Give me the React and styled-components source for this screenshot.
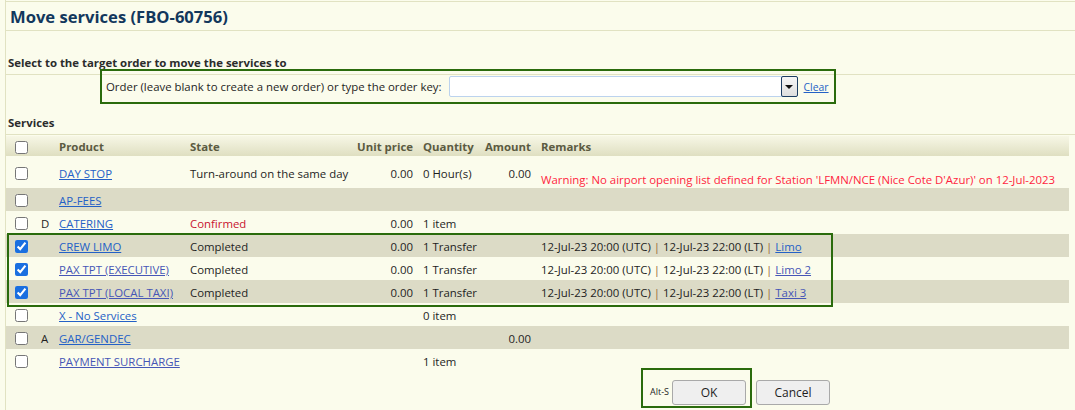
import React from "react";
import styled, { createGlobalStyle } from "styled-components";

const FONT = `"Open Sans", "Noto Sans", Arial, sans-serif`;

const Global = createGlobalStyle`
  html, body { margin: 0; padding: 0; background: #fbfcec; }
  body { font-family: ${FONT}; font-size: 11.4px; color: #1e1e1e; }
`;

const Page = styled.div`
  margin-left: 5px;
  min-height: 410px;
  border-left: 1px solid #e1e2c2;
  padding-top: 1px;
  box-sizing: border-box;
`;

const TitleBar = styled.div`
  height: 28px;
  border-top: 1px solid #e1e2c2;
  border-bottom: 1px solid #e1e2c2;
  display: flex;
  align-items: center;
  padding-left: 4px;
`;

const Title = styled.h1`
  margin: 0;
  font-size: 16.6px;
  font-weight: 700;
  color: #12375c;
`;

const SectionHeading = styled.div`
  margin-top: ${(p) => p.$gap}px;
  padding: 1px 0 3px 2px;
  line-height: 16px;
  font-weight: 700;
  color: #2c2c2c;
  border-bottom: 1px solid #e1e2c2;
`;

const OrderBox = styled.div`
  position: relative;
  margin: -6px 0 0 94px;
  width: 736px;
  height: 35px;
  box-sizing: border-box;
  border: 2px solid #2a6b0c;
  display: flex;
  align-items: center;
  padding: 0 4px;
`;

const Label = styled.span`
  white-space: nowrap;
  color: #1e1e1e;
`;

const Combo = styled.div`
  margin-left: 7px;
  width: 349px;
  height: 21px;
  box-sizing: border-box;
  border: 1px solid #bcd3ee;
  border-radius: 2px;
  background: #fff;
  display: flex;
  justify-content: flex-end;
`;

const ComboButton = styled.div`
  width: 17px;
  height: 21px;
  margin: -1px -1px 0 0;
  box-sizing: border-box;
  border: 1px solid #1d3d62;
  border-radius: 2px;
  background: linear-gradient(#f6f6f6, #dedede);
  display: flex;
  align-items: center;
  justify-content: center;
`;

const Arrow = styled.span`
  width: 0;
  height: 0;
  border-left: 4px solid transparent;
  border-right: 4px solid transparent;
  border-top: 4px solid #111;
`;

const Link = styled.a`
  color: ${(p) => (p.$visited ? "#4656b6" : "#2461c6")};
  text-decoration: underline;
  cursor: pointer;
`;

const ClearLink = styled(Link)`
  margin-left: 6px;
  font-size: 10.4px;
`;

const TableWrap = styled.div`
  position: relative;
  margin-top: 1px;
  width: 1063px;
`;

const Table = styled.table`
  width: 1063px;
  table-layout: fixed;
  border-collapse: collapse;
  border-spacing: 0;
`;

const HeadRow = styled.tr`
  height: 20px;
  background: linear-gradient(#f7f7e6, #dfdfc1);
`;

const Th = styled.th`
  padding: 0 5px;
  font-weight: 700;
  color: #5b5a41;
  text-align: ${(p) => p.$align || "left"};
  white-space: nowrap;
`;

const Row = styled.tr`
  height: ${(p) => p.$h || 23}px;
  background: ${(p) => (p.$alt ? "#dcdbc6" : "transparent")};
`;

const Td = styled.td`
  padding: 2px 5px 0;
  vertical-align: middle;
  white-space: nowrap;
  text-align: ${(p) => p.$align || "left"};
`;

const FlagCell = styled(Td)`
  padding-left: 5px;
  padding-right: 0;
`;

const CheckCell = styled.td`
  text-align: center;
  padding: 0;
`;

const Check = styled.input.attrs({ type: "checkbox" })`
  margin: 0;
  width: 13px;
  height: 13px;
  vertical-align: middle;
  accent-color: #1a6fe0;
`;

const State = styled.span`
  color: ${(p) => (p.$tone === "red" ? "#c8122e" : "#1e1e1e")};
`;

const Warning = styled.div`
  padding-top: 13px;
  line-height: 17px;
  color: #ff1f3f;
`;

const Pipe = styled.span`
  color: #9a6b3a;
`;

const Highlight = styled.div`
  position: absolute;
  left: ${(p) => p.$left}px;
  top: ${(p) => p.$top}px;
  width: ${(p) => p.$w}px;
  height: ${(p) => p.$h}px;
  border: 2px solid #2a6b0c;
  box-sizing: border-box;
  pointer-events: none;
`;

const Footer = styled.div`
  margin-top: -4px;
  padding-left: 635px;
  display: flex;
  align-items: flex-start;
  gap: 4px;
`;

const HotkeyGroup = styled.div`
  position: relative;
  width: 111px;
  height: 40px;
  box-sizing: border-box;
  border: 2px solid #2a6b0c;
  display: flex;
  align-items: flex-end;
  padding: 0 2px 1px 7px;
`;

const Hint = styled.span`
  font-size: 9px;
  color: #1e1e1e;
  margin-right: 3px;
  align-self: center;
  margin-top: 8px;
`;

const Button = styled.button`
  width: 74px;
  height: 25px;
  box-sizing: border-box;
  border: 1px solid #a9a9a9;
  border-radius: 3px;
  background: #efefef;
  font-family: ${FONT};
  font-size: 12px;
  color: #1e1e1e;
  padding: 0;
  margin-top: ${(p) => p.$offset || 0}px;
`;

const rows = [
  { product: "DAY STOP", state: "Turn-around on the same day", price: "0.00", qty: "0 Hour(s)", amount: "0.00", warning: "Warning: No airport opening list defined for Station 'LFMN/NCE (Nice Cote D'Azur)' on 12-Jul-2023", h: 32 },
  { product: "AP-FEES", alt: true },
  { flag: "D", product: "CATERING", state: "Confirmed", tone: "red", price: "0.00", qty: "1 item" },
  { product: "CREW LIMO", state: "Completed", price: "0.00", qty: "1 Transfer", link: "Limo", checked: true, alt: true },
  { product: "PAX TPT (EXECUTIVE)", state: "Completed", price: "0.00", qty: "1 Transfer", link: "Limo 2", checked: true, visited: true },
  { product: "PAX TPT (LOCAL TAXI)", state: "Completed", price: "0.00", qty: "1 Transfer", link: "Taxi 3", checked: true, alt: true, visited: true },
  { product: "X - No Services", qty: "0 item" },
  { flag: "A", product: "GAR/GENDEC", amount: "0.00", alt: true },
  { product: "PAYMENT SURCHARGE", qty: "1 item", visited: true },
];

export default function App() {
  return (
    <>
      <Global />
      <Page>
        <TitleBar>
          <Title>Move services (FBO-60756)</Title>
        </TitleBar>
        <SectionHeading $gap={23}>Select to the target order to move the services to</SectionHeading>
        <OrderBox>
          <Label>Order (leave blank to create a new order) or type the order key:</Label>
          <Combo>
            <ComboButton>
              <Arrow />
            </ComboButton>
          </Combo>
          <ClearLink>Clear</ClearLink>
        </OrderBox>
        <SectionHeading $gap={10}>Services</SectionHeading>
        <TableWrap>
          <Table>
            <colgroup>
              <col style={{ width: 30 }} />
              <col style={{ width: 18 }} />
              <col style={{ width: 131 }} />
              <col style={{ width: 165 }} />
              <col style={{ width: 68 }} />
              <col style={{ width: 62 }} />
              <col style={{ width: 56 }} />
              <col />
            </colgroup>
            <thead>
              <HeadRow>
                <CheckCell as="th"><Check readOnly /></CheckCell>
                <Th />
                <Th>Product</Th>
                <Th>State</Th>
                <Th $align="right">Unit price</Th>
                <Th>Quantity</Th>
                <Th $align="right">Amount</Th>
                <Th>Remarks</Th>
              </HeadRow>
            </thead>
            <tbody>
              {rows.map((r) => (
                <Row key={r.product} $alt={r.alt} $h={r.h}>
                  <CheckCell><Check checked={!!r.checked} readOnly /></CheckCell>
                  <FlagCell>{r.flag}</FlagCell>
                  <Td><Link $visited={r.visited}>{r.product}</Link></Td>
                  <Td><State $tone={r.tone}>{r.state}</State></Td>
                  <Td $align="right">{r.price}</Td>
                  <Td>{r.qty}</Td>
                  <Td $align="right">{r.amount}</Td>
                  <Td>
                    {r.warning && <Warning>{r.warning}</Warning>}
                    {r.link && (
                      <>
                        12-Jul-23 20:00 (UTC) <Pipe>|</Pipe> 12-Jul-23 22:00 (LT) <Pipe>|</Pipe>{" "}
                        <Link $visited={r.visited}>{r.link}</Link>
                      </>
                    )}
                  </Td>
                </Row>
              ))}
            </tbody>
          </Table>
          <Highlight $left={1} $top={97} $w={826} $h={74} />
        </TableWrap>
        <Footer>
          <HotkeyGroup>
            <Hint>Alt-S</Hint>
            <Button>OK</Button>
          </HotkeyGroup>
          <Button $offset={12}>Cancel</Button>
        </Footer>
      </Page>
    </>
  );
}
